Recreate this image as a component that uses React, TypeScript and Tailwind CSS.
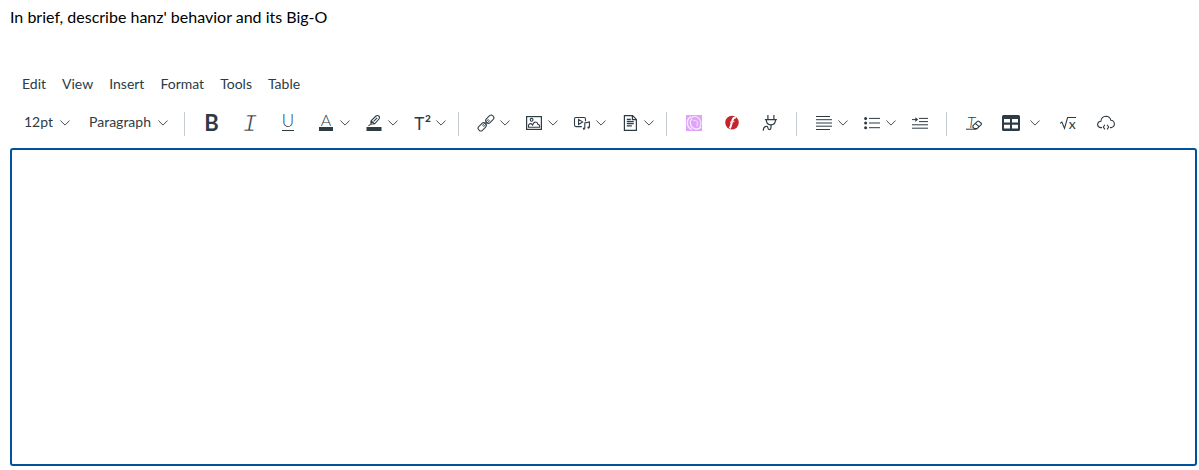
import React, { useState } from "react";

const menus = ["Edit", "View", "Insert", "Format", "Tools", "Table"];

interface IconProps {
  width?: number;
  children: React.ReactNode;
}

// Base for the line icons, 16px high
const Icon = ({ width = 16, children }: IconProps) => (
  <svg
    width={width}
    height={16}
    viewBox={`0 0 ${width} 16`}
    fill="none"
    stroke="currentColor"
    strokeWidth="1"
    className="shrink-0 overflow-visible"
    aria-hidden="true"
  >
    {children}
  </svg>
);

const Chevron = () => (
  <svg width="10" height="6" viewBox="0 0 10 6" fill="none" stroke="currentColor" className="shrink-0" aria-hidden="true">
    <path d="M0.4 0.5 5 5.1 9.6 0.5" strokeWidth="0.9" />
  </svg>
);

interface ToolProps {
  label: string;
  children: React.ReactNode;
}

const ToolButton = ({ label, children }: ToolProps) => (
  <button type="button" aria-label={label} className="flex h-6 w-[38px] items-center justify-center pb-0.5">
    {children}
  </button>
);

// Button with a drop-down arrow next to the icon
const SplitButton = ({ label, children }: ToolProps) => (
  <button type="button" aria-label={label} className="flex h-6 w-12 items-center gap-1.5 pb-0.5 pl-[11px]">
    {children}
    <Chevron />
  </button>
);

const Group = ({ children }: { children: React.ReactNode }) => (
  <div className="flex h-6 items-center border-l border-[#c7cdd1] pl-2 pr-[7px]">{children}</div>
);

interface PickerProps {
  label: string;
  value: string;
  options: string[];
  onChange: (value: string) => void;
}

const Picker = ({ label, value, options, onChange }: PickerProps) => (
  <label className="flex h-6 items-center gap-[7px] pb-0.5">
    <select
      aria-label={label}
      value={value}
      onChange={e => onChange(e.target.value)}
      className="field-sizing-content appearance-none bg-transparent pb-0.5 text-sm leading-5 outline-none"
    >
      {options.map(option => (
        <option key={option}>{option}</option>
      ))}
    </select>
    <Chevron />
  </label>
);

const App = () => {
  const [fontSize, setFontSize] = useState<string>("12pt");
  const [block, setBlock] = useState<string>("Paragraph");
  const [answer, setAnswer] = useState<string>("");

  return (
    <main className="bg-white pb-1 pl-2.5 pr-0.5 pt-[5px] font-['Lato',sans-serif] text-[#2d3b45]">
      <p className="text-base leading-6 text-black">In brief, describe hanz' behavior and its Big-O</p>

      {/* Menu bar */}
      <nav className="mt-[45px] flex gap-4 px-3 text-sm leading-5">
        {menus.map(menu => (
          <button key={menu} type="button">
            {menu}
          </button>
        ))}
      </nav>

      {/* Toolbar */}
      <div role="toolbar" aria-label="Formatting" className="mb-3 mt-[18px] flex flex-wrap items-center">
        <div className="flex gap-[19px] pl-3.5 pr-4">
          <Picker label="Font size" value={fontSize} options={["12pt", "14pt", "18pt"]} onChange={setFontSize} />
          <Picker label="Block" value={block} options={["Paragraph", "Heading 2", "Heading 3"]} onChange={setBlock} />
        </div>

        <Group>
          <ToolButton label="Bold">
            <Icon>
              <text x="7.5" y="16" textAnchor="middle" fontSize="22" fontWeight="700" fill="currentColor" stroke="none">
                B
              </text>
            </Icon>
          </ToolButton>
          <ToolButton label="Italic">
            <Icon>
              <text
                x="8"
                y="16"
                textAnchor="middle"
                fontFamily="Liberation Mono, monospace"
                fontSize="24"
                fontStyle="italic"
                fill="currentColor"
                stroke="#fff"
                strokeWidth="0.6"
              >
                I
              </text>
            </Icon>
          </ToolButton>
          <ToolButton label="Underline">
            <Icon>
              <text x="8" y="12" textAnchor="middle" fontSize="17" fontWeight="300" fill="currentColor" stroke="none">
                U
              </text>
              <path d="M2 15.5h12" />
            </Icon>
          </ToolButton>
          <SplitButton label="Text color">
            <Icon>
              <text x="8" y="10.5" textAnchor="middle" fontSize="16" fontWeight="300" fill="currentColor" stroke="none">
                A
              </text>
              <path d="M1 14h14" strokeWidth="4" />
            </Icon>
          </SplitButton>
          <SplitButton label="Background color">
            <Icon>
              <path d="M0.5 14h15" strokeWidth="4" />
              <path d="M5 5.8 10 1q1.5-1.1 2.8 0t.4 2.8L8.7 8.8 4.9 9.2zM5.2 6l3.2 2.7M5 9.1 2.4 10.9M7.6 6.4 11.2 2.9" strokeWidth="1.1" />
            </Icon>
          </SplitButton>
          <SplitButton label="Superscript and subscript">
            <Icon>
              <text x="5.2" y="15.3" textAnchor="middle" fontSize="17" fill="currentColor" stroke="none">
                T
              </text>
              <text x="13.8" y="7" textAnchor="middle" fontSize="10" fontWeight="900" fill="currentColor" stroke="none">
                2
              </text>
            </Icon>
          </SplitButton>
        </Group>

        <Group>
          <SplitButton label="Link">
            <Icon>
              <g transform="rotate(-45 8 8)">
                <rect x="-1.9" y="5.4" width="9" height="5.2" rx="2.2" />
                <rect x="8.9" y="5.4" width="9" height="5.2" rx="2.2" />
                <path d="M4 7.1h8M4 8.9h8M4 7.1v1.8M12 7.1v1.8" strokeWidth="0.9" />
              </g>
            </Icon>
          </SplitButton>
          <SplitButton label="Image">
            <Icon>
              <rect x="0.6" y="1.6" width="14.8" height="12.8" strokeWidth="1.2" />
              <circle cx="5.6" cy="4.8" r="1.4" strokeWidth="1.1" />
              <path d="M2.5 12.3V10q1.2-2 2.8-1.2L6.6 10q1-3 3.2-3 1.6 0 2 2.2 1.7.4 1.8 1.6v1.5z" strokeWidth="1.1" />
            </Icon>
          </SplitButton>
          <SplitButton label="Media">
            <Icon>
              <path d="M7.8 11.6H2q-1.5 0-1.5-1.5V4Q.5 2.5 2 2.5h8q1.5 0 1.5 1.5v2.3M4.6 4.4v5l4-2.5z" strokeWidth="1.1" />
              <path d="M10.8 13.6V8l4.6-1v5.4" strokeWidth="1.1" />
              <circle cx="9.9" cy="13.7" r="1.1" fill="currentColor" stroke="none" />
              <circle cx="14.5" cy="12.6" r="1.1" fill="currentColor" stroke="none" />
            </Icon>
          </SplitButton>
          <SplitButton label="Document">
            <Icon>
              <path d="M2.4.6h8.2l3.8 3.8v11H2.4zM10.4.8v3.8h3.8" strokeWidth="1.2" />
              <path d="M4.8 4.5h4M4.8 6.6h7M4.8 8.6h7M4.8 10.8h5" strokeWidth="1.3" />
            </Icon>
          </SplitButton>
        </Group>

        <Group>
          <ToolButton label="Studio">
            <Icon>
              <rect width="16" height="16" fill="#dfa3fa" stroke="none" />
              <path d="M5 1.6A7.2 7.2 0 0 0 6 14.6" stroke="#f7e6ff" strokeWidth="1.5" />
              <path d="M5.2 2.6q5-2.8 8 1.2t.6 8.4" stroke="#f3dcff" strokeWidth="1.3" />
              <path d="M6.2 3.6Q3.4 6 4.6 9.6t5.4 4.6q3.2 0 5-2.4" stroke="#fbf2ff" strokeWidth="1.2" />
              <path d="M7 5.6q3-1 4.2 1.4t-.8 4.2" stroke="#f0d2fe" strokeWidth="1.2" />
            </Icon>
          </ToolButton>
          <ToolButton label="Equation app">
            <Icon>
              <circle cx="8" cy="7.6" r="6.8" fill="#c4242b" stroke="none" />
              <path d="M12 2.6Q9.4 2.2 8.5 5.2L6.8 11q-.3 1.4-1.2 2.4" stroke="#fff" strokeWidth="2" />
              <path d="M6 7.4 10.4 6.4" stroke="#f6d5d6" strokeWidth="1.2" />
            </Icon>
          </ToolButton>
          <ToolButton label="Apps">
            <Icon>
              <path d="M5.9 0v4.5M11.9 0v4.5M2.9 4.6h12M4.3 4.8q0 5 4.6 5t4.6-5" strokeWidth="1.2" />
              <path d="M9 9.8v2.8q0 2-1.5 2t-1.6-1.8Q5.6 11 4 11.3q-2.6.5-2.8 4.3" strokeWidth="1.2" />
            </Icon>
          </ToolButton>
        </Group>

        <Group>
          <SplitButton label="Align">
            <Icon>
              <path d="M0 1.5h14M0 4.7h16M0 8h16M0 11.2h16M0 14.5h14" />
            </Icon>
          </SplitButton>
          <SplitButton label="List">
            <Icon>
              <path d="M5 3.4h11M5 8h11M5 12.7h11" />
              <g fill="currentColor" stroke="none">
                <circle cx="1.6" cy="3.4" r="1.5" />
                <circle cx="1.6" cy="8" r="1.5" />
                <circle cx="1.6" cy="12.7" r="1.5" />
              </g>
            </Icon>
          </SplitButton>
          <ToolButton label="Increase indent">
            <Icon>
              <path d="M7 3.4h9M7 6.6h9M0 9.8h16M0 13.2h16M0 4.6h5" />
              <path d="M3.3 2.2 6.2 4.6 3.3 7z" fill="currentColor" stroke="none" />
            </Icon>
          </ToolButton>
        </Group>

        <Group>
          <ToolButton label="Clear formatting">
            <Icon>
              <text
                x="5.2"
                y="12.6"
                textAnchor="middle"
                fontSize="16"
                fontStyle="italic"
                fontWeight="300"
                fill="currentColor"
                stroke="none"
              >
                T
              </text>
              <path d="M0 14.2h10.5" />
              <path d="M7 10.6 11.4 6.4q.8-.6 1.6 0l2.2 1.8q.7.7 0 1.5L11 13.6H8.4L6.9 12.2zM9.4 8.4l3.6 3.2" strokeWidth="1.1" />
            </Icon>
          </ToolButton>
          <button
            type="button"
            aria-label="Table"
            className="flex h-6 w-14 items-center gap-2.5 pb-0.5 pl-[9px]"
          >
            <Icon width={18}>
              <rect width="18" height="16" rx="1.6" fill="currentColor" stroke="none" />
              <path d="M2 4h6v3.5H2zM10 4h6v3.5h-6zM2 9.8h6v3.7H2zM10 9.8h6v3.7h-6z" fill="#fff" stroke="none" />
            </Icon>
            <Chevron />
          </button>
          <ToolButton label="Math equation">
            <Icon>
              <path d="M0 8.4 1.9 7l2.6 6.4L7.6 2.5H16" strokeWidth="1.1" />
              <text x="12.2" y="13.8" textAnchor="middle" fontSize="14" fill="currentColor" stroke="none">
                x
              </text>
            </Icon>
          </ToolButton>
          <ToolButton label="Embed">
            <Icon width={18}>
              <path d="M5 12.6H3.6Q.6 12.2.6 9.3.8 6.5 3.9 6.2 4.4 1.3 9 1.2q4 .1 4.8 4 3.3.2 3.6 3.6 0 3.3-3.4 3.8h-1" strokeWidth="1.1" />
              <path d="M7.9 9.8 6.3 12l1.6 2.4M10.1 9.8l1.6 2.2-1.6 2.4" strokeWidth="1.1" />
            </Icon>
          </ToolButton>
        </Group>
      </div>

      <textarea
        aria-label="Answer"
        value={answer}
        onChange={e => setAnswer(e.target.value)}
        className="block min-h-[318px] w-full resize-none rounded-[3px] border-2 border-[#00529b] p-2.5 text-base outline-none"
      />
    </main>
  );
};

export default App;
